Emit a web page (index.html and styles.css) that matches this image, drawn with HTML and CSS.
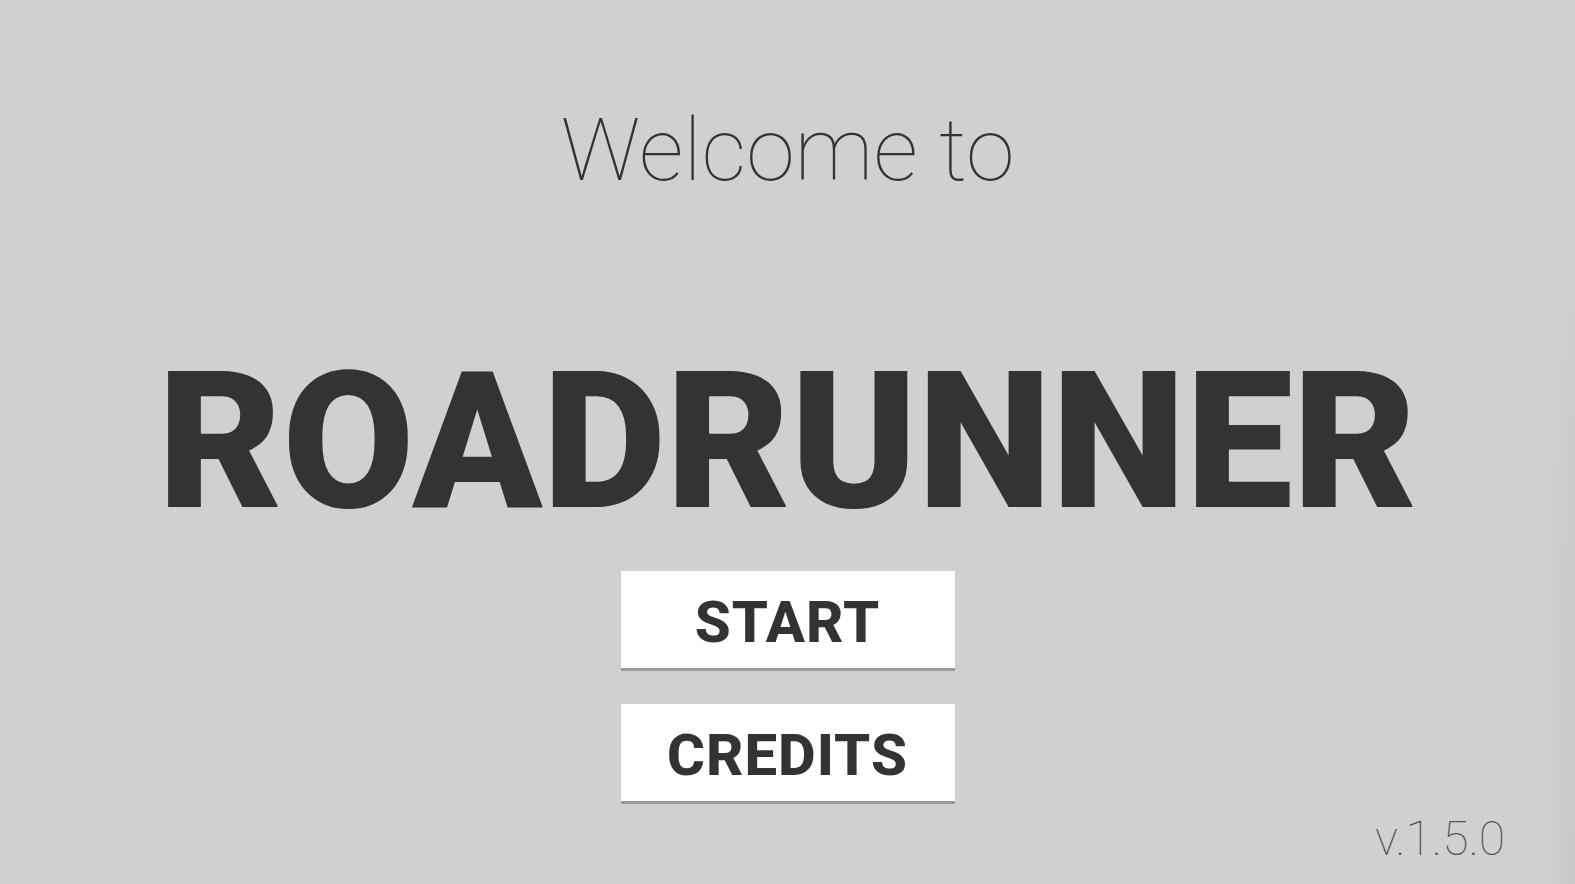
FILE: index.html
```html
<!DOCTYPE html>
<html lang="en">
<head>
<meta charset="utf-8">
<title>Roadrunner</title>
<link rel="stylesheet" href="styles.css">
</head>
<body>
<main class="screen">
  <h2 class="welcome">Welcome to</h2>
  <h1 class="title">ROADRUNNER</h1>
  <div class="menu">
    <button class="menu-btn">START</button>
    <button class="menu-btn">CREDITS</button>
  </div>
  <div class="version">v.1.5.0</div>
</main>
</body>
</html>
```
FILE: styles.css
```css
html, body {
  margin: 0;
  padding: 0;
  height: 100%;
}
body {
  background: #d0d0d0;
  font-family: Roboto, "Liberation Sans", sans-serif;
  color: #333333;
  overflow: hidden;
}
.screen {
  position: relative;
  height: 884px;
  display: flex;
  flex-direction: column;
  align-items: center;
  padding-top: 106px;
  box-sizing: border-box;
}
.screen::after {
  content: "";
  position: absolute;
  right: 0;
  top: 230px;
  bottom: 0;
  width: 30px;
  background: linear-gradient(to bottom, rgba(0,0,0,0), rgba(0,0,0,0.02) 40%, rgba(0,0,0,0.035));
  -webkit-mask-image: linear-gradient(to right, transparent, #000);
  mask-image: linear-gradient(to right, transparent, #000);
  pointer-events: none;
}
.welcome {
  margin: 0;
  font-size: 88px;
  line-height: 88px;
  font-weight: 100;
  color: #333;
}
.title {
  margin: 153px 0 0 0;
  font-size: 191px;
  line-height: 191px;
  font-weight: 900;
  color: #333;
}
.menu {
  margin-top: 33px;
  display: flex;
  flex-direction: column;
  gap: 33px;
}
.menu-btn {
  width: 334px;
  height: 100px;
  box-sizing: border-box;
  background: #ffffff;
  border: none;
  border-bottom: 3px solid #9a9a9a;
  font-family: Roboto, "Liberation Sans", sans-serif;
  font-weight: 800;
  font-size: 58px;
  line-height: 1;
  letter-spacing: 1px;
  color: #333;
  padding: 5px 0 0 0;
  cursor: pointer;
}
.version {
  position: absolute;
  right: 70px;
  bottom: 17px;
  font-size: 48px;
  font-weight: 100;
  color: #555;
}
```
